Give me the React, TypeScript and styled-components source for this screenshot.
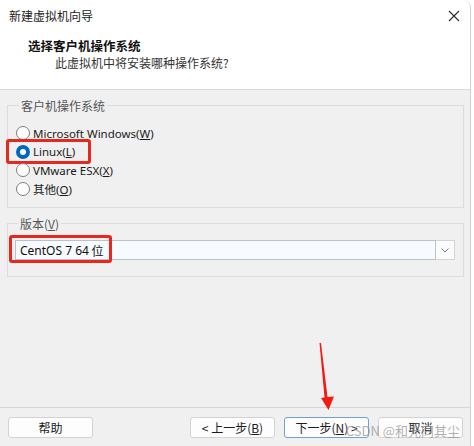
import * as React from "react";
import styled, { createGlobalStyle } from "styled-components";

const GlobalStyle = createGlobalStyle`
  html, body {
    margin: 0;
    background: #ffffff;
  }
  body {
    font-family: "Noto Sans", "Noto Sans CJK SC", sans-serif;
    color: #1b1b1b;
  }
`;

const cjk = `"Noto Sans CJK SC", "Noto Sans", sans-serif`;
const latin = `"Noto Sans", "Noto Sans CJK SC", sans-serif`;

const Window = styled.div`
  position: relative;
  width: 471px;
  height: 446px;
  display: flex;
  flex-direction: column;
  border-right: 1px solid #cfcfcf;
  border-top-right-radius: 8px;
  overflow: hidden;
  box-sizing: border-box;
`;

const Header = styled.div`
  height: 90px;
  background: #ffffff;
  border-bottom: 1px solid #dadada;
  box-sizing: border-box;
`;

const TitleBar = styled.div`
  height: 31px;
  display: flex;
  align-items: center;
  justify-content: space-between;
  padding: 0 10px 0 9px;
  font-family: ${cjk};
  font-size: 12px;
  color: #1a1a1a;
`;

const CloseIcon = () => (
  <svg width="12" height="12" viewBox="0 0 12 12">
    <path d="M1 1 L11 11 M11 1 L1 11" stroke="#2a2a2a" strokeWidth="1.1" />
  </svg>
);

const Heading = styled.div`
  padding-left: 28px;
  margin-top: 7px;
  font-family: ${cjk};
  font-weight: 700;
  font-size: 12.5px;
  line-height: 16px;
  color: #111;
`;

const Subtitle = styled.div`
  padding-left: 55px;
  margin-top: 1px;
  font-family: ${cjk};
  font-size: 12px;
  line-height: 16px;
  color: #333;
`;

const Body = styled.div`
  flex: 1;
  background: #f0f0f0;
  padding: 8px 6px 0 7px;
  display: flex;
  flex-direction: column;
  gap: 8px;
`;

const Group = styled.fieldset<{ $pad: string }>`
  margin: 0;
  border: 1px solid #dcdcdc;
  border-radius: 0;
  padding: ${p => p.$pad};
  min-width: 0;
`;

const Legend = styled.legend`
  padding: 0 2px;
  margin-left: 3px;
  font-family: ${cjk};
  font-size: 12px;
  line-height: 15px;
  color: #555;
`;

const RadioList = styled.div`
  display: flex;
  flex-direction: column;
`;

const RadioRow = styled.div`
  position: relative;
  height: 18.5px;
  display: flex;
  align-items: center;
  gap: 3px;
  font-family: ${latin};
  font-size: 11.5px;
  color: #1b1b1b;
`;

const RadioDot = styled.span<{ $checked?: boolean }>`
  width: 14px;
  height: 14px;
  border-radius: 50%;
  box-sizing: border-box;
  background: #ffffff;
  border: ${p => (p.$checked ? "4px solid #0067c0" : "1px solid #7d7d7d")};
  flex: none;
`;

const Key = styled.span`
  text-decoration: underline;
`;

const Cjk = styled.span`
  font-family: ${cjk};
`;

const Highlight = styled.span<{ $l: number; $t: number; $w: number; $h: number }>`
  position: absolute;
  left: ${p => p.$l}px;
  top: ${p => p.$t}px;
  width: ${p => p.$w}px;
  height: ${p => p.$h}px;
  border: 3px solid #e8281f;
  border-radius: 3px;
  box-sizing: border-box;
  pointer-events: none;
`;

const Combo = styled.div`
  position: relative;
  display: flex;
  height: 20px;
`;

const ComboField = styled.div`
  flex: 1;
  display: flex;
  align-items: center;
  padding-left: 4px;
  background: #f7faff;
  border: 1px solid #b9c2cc;
  box-sizing: border-box;
  font-family: ${latin};
  font-size: 12px;
  color: #111;
`;

const ComboButton = styled.div`
  width: 19px;
  display: flex;
  align-items: center;
  justify-content: center;
  background: #fbfbfb;
  border: 1px solid #d4d4d4;
  border-left: none;
  box-sizing: border-box;
`;

const Chevron = () => (
  <svg width="8" height="5" viewBox="0 0 8 5">
    <path d="M0.5 0.5 L4 4 L7.5 0.5" fill="none" stroke="#7a7a7a" strokeWidth="1" />
  </svg>
);

const Footer = styled.div`
  position: relative;
  height: 39px;
  background: #f0f0f0;
  border-top: 1px solid #d6d6d6;
  display: flex;
  align-items: flex-start;
  padding: 9px 7px 0 8px;
  box-sizing: border-box;
`;

const ButtonGroup = styled.div`
  margin-left: auto;
  display: flex;
  gap: 9px;
`;

const Button = styled.div<{ $primary?: boolean }>`
  width: 85px;
  height: 21px;
  display: flex;
  align-items: center;
  justify-content: center;
  background: #fdfdfd;
  border: 1px solid ${p => (p.$primary ? "#6f9fd6" : "#d3d3d3")};
  border-radius: 3px;
  box-sizing: border-box;
  font-family: ${cjk};
  font-size: 12px;
  color: #1b1b1b;
`;

const Watermark = styled.div`
  position: absolute;
  right: 10px;
  bottom: 6px;
  font-family: ${cjk};
  font-size: 13px;
  color: rgba(150, 150, 150, 0.75);
  pointer-events: none;
`;

const Arrow = styled.svg`
  position: absolute;
  left: 0;
  top: 0;
  pointer-events: none;
`;

const App = () => (
  <>
    <GlobalStyle />
    <Window>
      <Header>
        <TitleBar>
          <span>新建虚拟机向导</span>
          <CloseIcon />
        </TitleBar>
        <Heading>选择客户机操作系统</Heading>
        <Subtitle>此虚拟机中将安装哪种操作系统?</Subtitle>
      </Header>

      <Body>
        <Group $pad="11px 8px 9px 8px">
          <Legend>客户机操作系统</Legend>
          <RadioList>
            <RadioRow>
              <RadioDot />
              <span>
                Microsoft Windows(<Key>W</Key>)
              </span>
            </RadioRow>
            <RadioRow>
              <RadioDot $checked />
              <span>
                Linux(<Key>L</Key>)
              </span>
              <Highlight $l={-10} $t={-4} $w={85} $h={25} />
            </RadioRow>
            <RadioRow>
              <RadioDot />
              <span>
                VMware ESX(<Key>X</Key>)
              </span>
            </RadioRow>
            <RadioRow>
              <RadioDot />
              <span>
                <Cjk>其他</Cjk>(<Key>O</Key>)
              </span>
            </RadioRow>
          </RadioList>
        </Group>

        <Group $pad="9px 8px 16px 7px">
          <Legend>
            版本(<Key>V</Key>)
          </Legend>
          <Combo>
            <ComboField>
              CentOS 7 64 <Cjk>&nbsp;位</Cjk>
            </ComboField>
            <ComboButton>
              <Chevron />
            </ComboButton>
            <Highlight $l={-6} $t={-5} $w={103} $h={28} />
          </Combo>
        </Group>
      </Body>

      <Footer>
        <Button>帮助</Button>
        <ButtonGroup>
          <Button>
            &lt; 上一步(<Key>B</Key>)
          </Button>
          <Button $primary>
            下一步(<Key>N</Key>) &gt;
          </Button>
          <Button>取消</Button>
        </ButtonGroup>
        <Watermark>CSDN @和光同其尘</Watermark>
      </Footer>

      <Arrow width="471" height="446" viewBox="0 0 471 446">
        <polygon
          points="319.5,343 321,343 327.5,397 334,396.5 328.5,410 321,398 324.5,397.5"
          fill="#f21b12"
        />
      </Arrow>
    </Window>
  </>
);

export default App;
